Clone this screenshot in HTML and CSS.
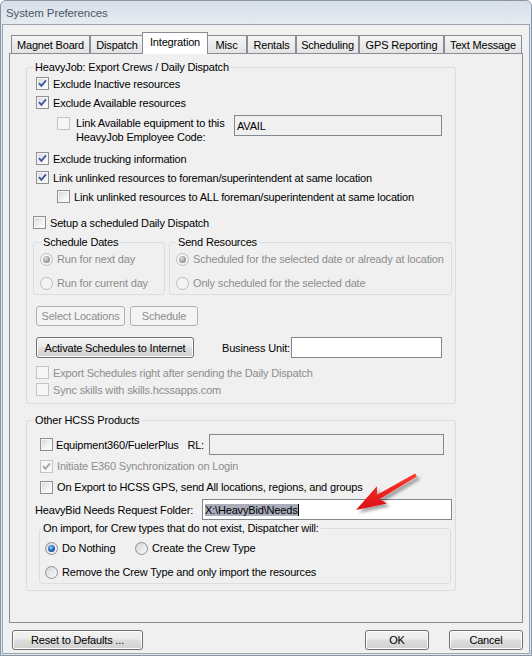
FILE: index.html
```html
<!DOCTYPE html>
<html lang="en">
<head>
    <meta charset="UTF-8">
    <title>System Preferences</title>
    <link rel="stylesheet" href="styles.css">
</head>
<body>
<div class="window">
    <div class="titlebar">System Preferences</div>

    <div class="client">
        <!-- tab strip -->
        <div class="tabs">
            <div class="tab">Magnet Board</div>
            <div class="tab">Dispatch</div>
            <div class="tab active">Integration</div>
            <div class="tab">Misc</div>
            <div class="tab">Rentals</div>
            <div class="tab">Scheduling</div>
            <div class="tab">GPS Reporting</div>
            <div class="tab">Text Message</div>
        </div>

        <div class="panel">
            <!-- HeavyJob export -->
            <fieldset class="group heavyjob">
                <legend>HeavyJob: Export Crews / Daily Dispatch</legend>
                <div class="group-body">
                    <div class="row">
                        <span class="box"><svg viewBox="0 0 11 11"><path d="M2 5.2 L4.4 7.8 L9 2.4"/></svg></span>Exclude Inactive resources
                    </div>
                    <div class="row">
                        <span class="box"><svg viewBox="0 0 11 11"><path d="M2 5.2 L4.4 7.8 L9 2.4"/></svg></span>Exclude Available resources
                    </div>
                    <div class="row row-link">
                        <span class="box flat"></span>
                        <span class="link-label">Link Available equipment to this<br>HeavyJob Employee Code:</span>
                        <div class="field readonly avail">AVAIL</div>
                    </div>
                    <div class="row">
                        <span class="box"><svg viewBox="0 0 11 11"><path d="M2 5.2 L4.4 7.8 L9 2.4"/></svg></span>Exclude trucking information
                    </div>
                    <div class="row">
                        <span class="box"><svg viewBox="0 0 11 11"><path d="M2 5.2 L4.4 7.8 L9 2.4"/></svg></span>Link unlinked resources to foreman/superintendent at same location
                    </div>
                    <div class="row row-sub">
                        <span class="box"></span>Link unlinked resources to ALL foreman/superintendent at same location
                    </div>
                    <div class="row row-setup">
                        <span class="box"></span>Setup a scheduled Daily Dispatch
                    </div>

                    <div class="sched">
                        <fieldset class="group sched-dates">
                            <legend>Schedule Dates</legend>
                            <div class="group-body">
                                <div class="row radio-row disabled"><span class="radio on"></span>Run for next day</div>
                                <div class="row radio-row disabled"><span class="radio"></span>Run for current day</div>
                            </div>
                        </fieldset>
                        <fieldset class="group sched-send">
                            <legend>Send Resources</legend>
                            <div class="group-body">
                                <div class="row radio-row disabled"><span class="radio on"></span>Scheduled for the selected date or already at location</div>
                                <div class="row radio-row disabled"><span class="radio"></span>Only scheduled for the selected date</div>
                            </div>
                        </fieldset>
                    </div>

                    <div class="buttons">
                        <button class="btn btn-locations" disabled>Select Locations</button>
                        <button class="btn btn-schedule" disabled>Schedule</button>
                    </div>

                    <div class="row row-activate">
                        <button class="btn btn-activate">Activate Schedules to Internet</button>
                        <span class="unit-label">Business Unit:</span>
                        <div class="field unit"></div>
                    </div>

                    <div class="row row-small row-export disabled">
                        <span class="box"></span>Export Schedules right after sending the Daily Dispatch
                    </div>
                    <div class="row row-small disabled">
                        <span class="box"></span>Sync skills with skills.hcssapps.com
                    </div>
                </div>
            </fieldset>

            <!-- other products -->
            <fieldset class="group other">
                <legend>Other HCSS Products</legend>
                <div class="group-body">
                    <div class="row row-equip">
                        <span class="box"></span>
                        <span class="equip-label">Equipment360/FuelerPlus</span>
                        <span class="rl-label">RL:</span>
                        <div class="field readonly rl"></div>
                    </div>
                    <div class="row row-other disabled">
                        <span class="box"><svg viewBox="0 0 11 11"><path d="M2 5.2 L4.4 7.8 L9 2.4"/></svg></span>Initiate E360 Synchronization on Login
                    </div>
                    <div class="row row-other">
                        <span class="box"></span>On Export to HCSS GPS, send All locations, regions, and groups
                    </div>
                    <div class="row row-folder">
                        <span class="folder-label">HeavyBid Needs Request Folder:</span>
                        <div class="field folder"><span class="selected">X:\HeavyBid\Needs</span></div>
                    </div>

                    <fieldset class="group import">
                        <legend>On import, for Crew types that do not exist, Dispatcher will:</legend>
                        <div class="group-body">
                            <div class="row radio-row">
                                <span class="option first"><span class="radio on"></span>Do Nothing</span>
                                <span class="option"><span class="radio"></span>Create the Crew Type</span>
                            </div>
                            <div class="row radio-row">
                                <span class="radio"></span>Remove the Crew Type and only import the resources
                            </div>
                        </div>
                    </fieldset>
                </div>
            </fieldset>
        </div>

        <div class="footer">
            <button class="btn btn-reset">Reset to Defaults ...</button>
            <span class="spacer"></span>
            <button class="btn btn-ok">OK</button>
            <button class="btn btn-cancel">Cancel</button>
        </div>
    </div>

    <!-- callout arrow pointing at the folder box -->
    <svg class="callout" viewBox="0 0 532 656">
        <defs>
            <filter id="shade" x="-20%" y="-20%" width="160%" height="160%">
                <feDropShadow dx="3" dy="3" stdDeviation="1.6" flood-color="#000" flood-opacity="0.35"/>
            </filter>
            <linearGradient id="red" x1="0" y1="0" x2="0" y2="1">
                <stop offset="0" stop-color="#ff3a2e"/>
                <stop offset="1" stop-color="#d80f14"/>
            </linearGradient>
        </defs>
        <polygon filter="url(#shade)" fill="url(#red)"
                 points="356,510 386.9,503.5 379.7,499.1 416.9,476.6 415.1,473.4 377.1,494.7 376.9,486.3"/>
    </svg>
</div>
</body>
</html>
```

FILE: styles.css
```css
* {
    box-sizing: border-box;
}
body {
    margin: 0;
    font-family: "Liberation Sans", Arial, sans-serif;
    font-size: 11px;
    letter-spacing: -0.17px;
    color: #000;
}

/* window frame */
.window {
    position: relative;
    width: 532px;
    height: 656px;
    border: 1px solid #8796a5;
    border-radius: 6px 6px 0 0;
    padding: 0 1px 1px;
    background: #dfe6ed;
}
.titlebar {
    height: 23px;
    display: flex;
    align-items: center;
    padding-left: 4px;
    font-size: 11.5px;
    letter-spacing: -0.1px;
    color: #4b5766;
    border-radius: 5px 5px 0 0;
    background: linear-gradient(#d7dfe8, #e6ebf1);
}
.client {
    height: 630px;
    border: 1px solid #9ba6b1;
    background: #f0f0f0;
}

/* tabs */
.tabs {
    position: relative;
    z-index: 1;
    display: flex;
    align-items: flex-end;
    height: 21px;
    margin: 7px 0 0 8px;
}
.tab {
    height: 18px;
    display: flex;
    align-items: center;
    justify-content: center;
    white-space: nowrap;
    border: 1px solid #898c95;
    border-bottom: 0;
    background: linear-gradient(#f4f4f4, #e3e3e3);
}
.tab:nth-child(1) { width: 79px; }
.tab:nth-child(2) { width: 54px; }
.tab:nth-child(3) { width: 62px; }
.tab:nth-child(4) { width: 41px; }
.tab:nth-child(5) { width: 49px; }
.tab:nth-child(6) { width: 63px; }
.tab:nth-child(7) { width: 85px; }
.tab:nth-child(8) { width: 78px; }
.tab.active {
    position: relative;
    z-index: 1;
    width: 66px;
    height: 22px;
    margin: 0 -2px -1px;
    padding-bottom: 3px;
    background: #fff;
}

.panel {
    width: 514px;
    height: 570px;
    margin-left: 6px;
    padding: 6px 0 0 16px;
    border: 1px solid #898c95;
    background: #f0f0f0;
}

/* group boxes */
.group {
    margin: 0;
    padding: 0;
    min-width: 0;
    border: 1px solid #d5dfe5;
    border-radius: 3px;
}
.group legend {
    padding: 0 2px;
    margin-left: 6px;
    line-height: 14px;
}
.row {
    display: flex;
    align-items: center;
    height: 19px;
    white-space: nowrap;
}
.disabled {
    color: #8d8d8d;
}

/* check boxes */
.box {
    flex: none;
    width: 13px;
    height: 13px;
    margin-right: 4px;
    border: 1px solid #8e8f8f;
    background: linear-gradient(135deg, #d2d5da, #f2f3f5 60%, #fff);
    box-shadow: inset 0 0 0 1px #f7f7f7;
}
.box svg {
    display: block;
    width: 11px;
    height: 11px;
}
.box path {
    fill: none;
    stroke: #3b5797;
    stroke-width: 1.8;
}
.box.flat,
.disabled .box {
    border-color: #c3c4c5;
    background: #f6f6f6;
    box-shadow: none;
}
.disabled .box path {
    stroke: #a6a6a6;
}

/* radio buttons */
.radio {
    flex: none;
    width: 13px;
    height: 13px;
    margin-right: 4px;
    border: 1px solid #8e8f8f;
    border-radius: 50%;
    display: flex;
    align-items: center;
    justify-content: center;
    background: linear-gradient(135deg, #d2d5da, #fafafa);
}
.radio.on::after {
    content: "";
    width: 7px;
    height: 7px;
    border-radius: 50%;
    background: radial-gradient(circle at 40% 35%, #8ed2fb, #1b62b4 55%, #0b3a7c);
}
.disabled .radio {
    border-color: #bdbebf;
    background: #f4f4f4;
}
.disabled .radio.on::after {
    background: radial-gradient(circle at 40% 35%, #e0e0e0, #9a9a9a 60%, #7d7d7d);
}
.radio-row {
    height: 20px;
}
.radio-row + .radio-row {
    margin-top: 4px;
}

/* push buttons */
.btn {
    flex: none;
    height: 20px;
    padding: 0;
    font: inherit;
    letter-spacing: inherit;
    color: #000;
    border: 1px solid #707070;
    border-radius: 3px;
    background: linear-gradient(#f3f3f3, #ebebeb 45%, #dddddd 50%, #d0d0d0);
    box-shadow: inset 0 0 0 1px #fcfcfc;
}
.btn:disabled {
    color: #8d8d8d;
    border-color: #adb2b5;
    background: #f4f4f4;
    box-shadow: none;
}

/* text boxes */
.field {
    flex: none;
    height: 21px;
    display: flex;
    align-items: center;
    padding: 0 2px;
    border: 1px solid #828790;
    background: #fff;
}
.field.readonly {
    background: #f0f0f0;
}
.selected {
    background: #a9adba;
    border-right: 1px solid #000;
}

/* HeavyJob group */
.heavyjob {
    width: 430px;
}
.heavyjob > .group-body {
    padding: 0 0 5px 9px;
}
.row-link {
    height: 37px;
    align-items: flex-start;
    padding: 4px 0 5px;
    margin-left: 21px;
}
.row-link .box {
    margin: 1px 6px 0 0;
}
.link-label {
    width: 158px;
    line-height: 14px;
}
.avail {
    width: 208px;
    margin-top: -1px;
}
.row-sub {
    margin-left: 21px;
}
.row-setup {
    margin: 7px 0 0 -3px;
}
.sched {
    display: flex;
    gap: 4px;
    margin: 3px 0 0 -3px;
}
.sched-dates {
    width: 132px;
}
.sched-send {
    width: 283px;
}
.sched .group-body {
    padding: 0 0 1px 6px;
}
.sched-dates legend {
    margin-left: 7px;
}
.buttons {
    display: flex;
    gap: 5px;
    margin-top: 11px;
}
.btn-locations { width: 89px; }
.btn-schedule { width: 68px; }
.row-activate {
    height: 21px;
    margin-top: 11px;
}
.btn-activate {
    width: 158px;
    height: 21px;
}
.unit-label {
    width: 69px;
    margin-left: 28px;
}
.unit {
    width: 151px;
}
.row-small {
    height: 17px;
}
.row-export {
    margin-top: 6px;
}

/* other products group */
.other {
    width: 430px;
    margin-top: 9px;
}
.other > .group-body {
    padding: 0 0 6px 8px;
}
.row-equip {
    height: 21px;
    margin: 7px 0 0 5px;
}
.row-equip .box {
    margin-right: 3px;
}
.equip-label {
    width: 126px;
}
.rl-label {
    width: 27px;
    padding-right: 5px;
    text-align: right;
}
.rl {
    width: 235px;
}
.row-other {
    height: 20px;
    margin: 1px 0 0 5px;
}
.row-folder {
    height: 21px;
    margin-top: 2px;
}
.folder-label {
    width: 167px;
}
.folder {
    width: 250px;
}
.import {
    width: 412px;
    margin: 1px 0 0 4px;
}
.import legend {
    margin-left: 1px;
}
.import .group-body {
    padding: 3px 0 1px 5px;
}
.option {
    display: flex;
    align-items: center;
}
.option.first {
    width: 90px;
}

/* dialog buttons */
.footer {
    display: flex;
    margin-top: 7px;
    padding: 0 6px 0 9px;
}
.spacer {
    flex: 1;
}
.btn-reset { width: 131px; }
.btn-ok { width: 64px; margin-right: 20px; }
.btn-cancel { width: 74px; }

.callout {
    position: absolute;
    left: -1px;
    top: -1px;
    width: 532px;
    height: 656px;
    pointer-events: none;
}
```
